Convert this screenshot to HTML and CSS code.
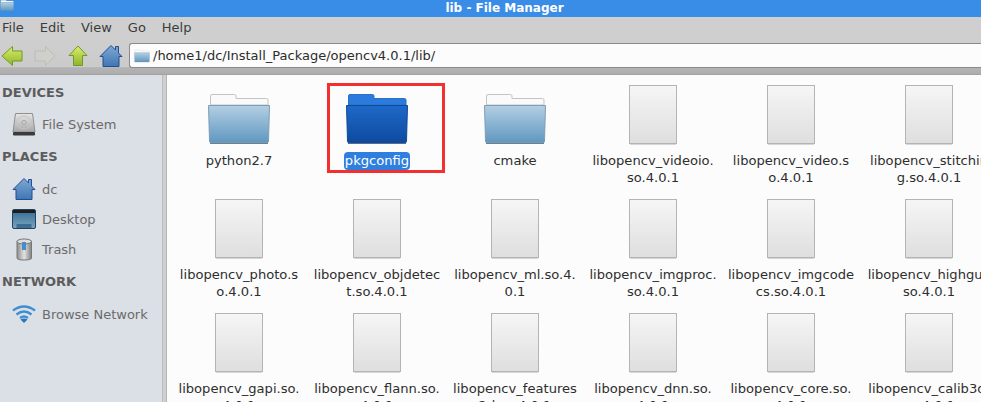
FILE: index.html
```html
<!DOCTYPE html>
<html lang="en">
<head>
<meta charset="utf-8">
<title>lib - File Manager</title>
<link rel="stylesheet" href="styles.css">
</head>
<body>
<svg class="defs" width="0" height="0" aria-hidden="true">
  <defs>
    <linearGradient id="gf" x1="0" y1="0" x2="0" y2="1"><stop offset="0" stop-color="#b3cfe4"/><stop offset="1" stop-color="#6097bf"/></linearGradient>
    <linearGradient id="gs" x1="0" y1="0" x2="0" y2="1"><stop offset="0" stop-color="#1f69c8"/><stop offset="1" stop-color="#0d4a9f"/></linearGradient>
    <linearGradient id="gd" x1="0" y1="0" x2="0" y2="1"><stop offset="0" stop-color="#f6f6f6"/><stop offset="1" stop-color="#dedede"/></linearGradient>
    <linearGradient id="gg" x1="0" y1="0" x2="0" y2="1"><stop offset="0" stop-color="#dcee6a"/><stop offset="1" stop-color="#8cb52a"/></linearGradient>
    <linearGradient id="gh" x1="0" y1="0" x2="0" y2="1"><stop offset="0" stop-color="#7fa8d4"/><stop offset="1" stop-color="#3f76b4"/></linearGradient>
    <linearGradient id="gdesk" x1="0" y1="0" x2="0" y2="1"><stop offset="0" stop-color="#2f6a94"/><stop offset="1" stop-color="#7da6bd"/></linearGradient>
    <linearGradient id="ghd" x1="0" y1="0" x2="0" y2="1"><stop offset="0" stop-color="#e6e6e6"/><stop offset="1" stop-color="#a8a8a8"/></linearGradient>
    <linearGradient id="gt" x1="0" y1="0" x2="1" y2="0"><stop offset="0" stop-color="#8d8d8d"/><stop offset=".5" stop-color="#e2e2e2"/><stop offset="1" stop-color="#808080"/></linearGradient>
    <symbol id="folder" viewBox="0 0 64 60">
      <path d="M3.500 20V11Q3.500 9.500 5 9.500H27.500Q29 9.500 29 11V13.500H59.500Q61 13.500 61 15V20Z" fill="#fafafa" stroke="#c4c4c4"/>
      <path d="M1.500 20.500H62.500L61.500 56Q61.500 58 59.500 58H4.500Q2.500 58 2.500 56Z" fill="url(#gf)" stroke="#7f9db5"/>
      <path d="M3 58.500H61" stroke="#6f7f8c"/>
    </symbol>
    <symbol id="folder-sel" viewBox="0 0 64 60">
      <path d="M3.500 20V11Q3.500 9.500 5 9.500H27.500Q29 9.500 29 11V13.500H59.500Q61 13.500 61 15V20Z" fill="#2b7bdc" stroke="#2a70c8"/>
      <path d="M1.500 20.500H62.500L61.500 56Q61.500 58 59.500 58H4.500Q2.500 58 2.500 56Z" fill="url(#gs)" stroke="#0f4a98"/>
      <path d="M3 58.500H61" stroke="#5d6f88"/>
    </symbol>
    <symbol id="doc" viewBox="0 0 48 60">
      <rect x=".5" y=".5" width="47" height="58" fill="url(#gd)" stroke="#b4b4b4"/>
      <path d="M1 59.500H47" stroke="#d6d6d6"/>
    </symbol>
    <symbol id="house" viewBox="0 0 24 24">
      <path d="M1 12.500 12 1.500 16.500 6V2.500H19.500V9L23 12.500 20 12.500V22.500H4V12.500Z" fill="url(#gh)" stroke="#1f4f90" stroke-linejoin="round"/>
    </symbol>
  </defs>
</svg>

<div class="window">
  <header class="titlebar">
    <svg class="title-icon" width="14" height="13" viewBox="0 9 64 50"><use href="#folder" width="64" height="60"/></svg>
    <span class="title-text">lib - File Manager</span>
  </header>

  <nav class="menubar">
    <span class="menu-item">File</span>
    <span class="menu-item">Edit</span>
    <span class="menu-item">View</span>
    <span class="menu-item">Go</span>
    <span class="menu-item">Help</span>
  </nav>

  <div class="toolbar">
    <svg class="tool tool-back" width="22" height="22" viewBox="0 0 22 22"><path d="M1 11 11.500 1.500V6H21V16H11.500V20.500Z" fill="url(#gg)" stroke="#6f9a2a" stroke-linejoin="round"/></svg>
    <svg class="tool tool-forward" width="22" height="22" viewBox="0 0 22 22"><path d="M21 11 11.500 1.500V6H1V16H11.500V20.500Z" fill="#cfcfcc" stroke="#bcbcb8" stroke-linejoin="round"/></svg>
    <svg class="tool tool-up" width="20" height="22" viewBox="0 0 20 22"><path d="M10 1 19 10.500H14.500V20.500H5.500V10.500H1Z" fill="url(#gg)" stroke="#6f9a2a" stroke-linejoin="round"/></svg>
    <svg class="tool tool-home" width="24" height="24"><use href="#house"/></svg>
    <div class="address">
      <svg width="16" height="14" viewBox="0 9 64 50"><use href="#folder" width="64" height="60"/></svg>
      <span class="path">/home1/dc/Install_Package/opencv4.0.1/lib/</span>
    </div>
  </div>

  <div class="content">
    <aside class="sidebar">
      <h2 class="side-head">DEVICES</h2>
      <div class="side-row">
        <svg width="24" height="24" viewBox="0 0 24 24"><path d="M3.500 1.500H20.500L23 20H1Z" fill="url(#ghd)" stroke="#8f8f8f"/><ellipse cx="12" cy="10.500" rx="7.500" ry="6.500" fill="none" stroke="#c4c4c4"/><circle cx="12" cy="10.500" r="2" fill="#cfcfcf" stroke="#a5a5a5"/><rect x="1" y="20" width="22" height="3.500" rx="1" fill="#3b3b3b"/></svg>
        <span>File System</span>
      </div>
      <h2 class="side-head">PLACES</h2>
      <div class="side-row">
        <svg width="24" height="24"><use href="#house"/></svg>
        <span>dc</span>
      </div>
      <div class="side-row row-tight">
        <svg width="24" height="20" viewBox="0 0 24 20"><rect x=".5" y=".5" width="23" height="19" rx="1.500" fill="url(#gdesk)" stroke="#23435e"/><rect x="1" y="1" width="22" height="3" fill="#1d1d1d"/><rect x="4.500" y="15" width="15" height="4" fill="#3d6d90"/></svg>
        <span>Desktop</span>
      </div>
      <div class="side-row row-tight">
        <svg width="24" height="23" viewBox="0 0 24 23"><path d="M5 3H19.500V20Q19.500 22 12 22 5 22 5 20Z" fill="url(#gt)" stroke="#777"/><ellipse cx="12.200" cy="3.500" rx="7.300" ry="2.500" fill="#dcdcdc" stroke="#777"/><rect x="10" y="4" width="4" height="8" fill="#4a8cc8"/></svg>
        <span>Trash</span>
      </div>
      <h2 class="side-head">NETWORK</h2>
      <div class="side-row">
        <svg width="24" height="20" viewBox="0 0 24 20"><path d="M1 6.500Q12 -1.500 23 6.500" fill="none" stroke="#3f8fd0" stroke-width="2.400"/><path d="M4.500 10.500Q12 4.500 19.500 10.500" fill="none" stroke="#3f8fd0" stroke-width="2.400"/><path d="M8 14Q12 11 16 14" fill="none" stroke="#3f8fd0" stroke-width="2.200"/><path d="M12 19 8.500 15.500Q12 13.500 15.500 15.500Z" fill="#2a75b8"/></svg>
        <span>Browse Network</span>
      </div>
    </aside>

    <div class="splitter"></div>

    <main class="files">
      <div class="item"><svg width="64" height="60"><use href="#folder"/></svg><span class="label">python2.7</span></div>
      <div class="item"><svg width="64" height="60"><use href="#folder-sel"/></svg><span class="label selected">pkgconfig</span></div>
      <div class="item"><svg width="64" height="60"><use href="#folder"/></svg><span class="label">cmake</span></div>
      <div class="item"><svg width="48" height="60"><use href="#doc"/></svg><span class="label">libopencv_videoio.<br>so.4.0.1</span></div>
      <div class="item"><svg width="48" height="60"><use href="#doc"/></svg><span class="label">libopencv_video.s<br>o.4.0.1</span></div>
      <div class="item"><svg width="48" height="60"><use href="#doc"/></svg><span class="label">libopencv_stitchin<br>g.so.4.0.1</span></div>

      <div class="item"><svg width="48" height="60"><use href="#doc"/></svg><span class="label">libopencv_photo.s<br>o.4.0.1</span></div>
      <div class="item"><svg width="48" height="60"><use href="#doc"/></svg><span class="label">libopencv_objdetec<br>t.so.4.0.1</span></div>
      <div class="item"><svg width="48" height="60"><use href="#doc"/></svg><span class="label">libopencv_ml.so.4.<br>0.1</span></div>
      <div class="item"><svg width="48" height="60"><use href="#doc"/></svg><span class="label">libopencv_imgproc.<br>so.4.0.1</span></div>
      <div class="item"><svg width="48" height="60"><use href="#doc"/></svg><span class="label">libopencv_imgcode<br>cs.so.4.0.1</span></div>
      <div class="item"><svg width="48" height="60"><use href="#doc"/></svg><span class="label">libopencv_highgui.<br>so.4.0.1</span></div>

      <div class="item"><svg width="48" height="60"><use href="#doc"/></svg><span class="label">libopencv_gapi.so.<br>4.0.1</span></div>
      <div class="item"><svg width="48" height="60"><use href="#doc"/></svg><span class="label">libopencv_flann.so.<br>4.0.1</span></div>
      <div class="item"><svg width="48" height="60"><use href="#doc"/></svg><span class="label">libopencv_features<br>2d.so.4.0.1</span></div>
      <div class="item"><svg width="48" height="60"><use href="#doc"/></svg><span class="label">libopencv_dnn.so.<br>4.0.1</span></div>
      <div class="item"><svg width="48" height="60"><use href="#doc"/></svg><span class="label">libopencv_core.so.<br>4.0.1</span></div>
      <div class="item"><svg width="48" height="60"><use href="#doc"/></svg><span class="label">libopencv_calib3d.<br>so.4.0.1</span></div>
    </main>
  </div>
  <div class="highlight"></div>
</div>
</body>
</html>
```
FILE: styles.css
```css
* { box-sizing: border-box; }
html, body { margin: 0; padding: 0; }
body { font-family: "DejaVu Sans", sans-serif; font-size: 13px; background: #fff; }
.defs { position: absolute; }
.window { position: relative; width: 981px; height: 402px; overflow: hidden; display: flex; flex-direction: column; }

.titlebar { height: 17px; background: #398de6; position: relative; display: flex; justify-content: center; align-items: center; flex: none; overflow: hidden; padding-left: 28px; }
.title-icon { position: absolute; left: 0; top: -1px; }
.title-text { color: #fff; font-weight: bold; font-size: 12px; line-height: 17px; }

.menubar { height: 21px; background: #cfcfcf; display: flex; align-items: center; gap: 16px; padding-left: 2px; flex: none; color: #3c3c3c; }
.menu-item { line-height: 20px; }

.toolbar { height: 37px; background: linear-gradient(#cfcfcf 0, #cbcbcb 78%, #b4b4b4 80%, #adadad 97%, #999 100%); display: flex; align-items: center; padding: 0 0 2px 1px; flex: none; }
.tool { flex: none; }
.tool-forward { margin-left: 11px; }
.tool-up { margin-left: 12px; }
.tool-home { margin-left: 11px; }
.address { flex: 1; height: 25px; margin-left: 6px; background: #fcfcfc; border: 1px solid #8a8a8a; border-right: 0; border-radius: 3px 0 0 3px; display: flex; align-items: center; padding-left: 4px; gap: 3px; color: #2c2c2c; }
.path { font-size: 13px; }

.content { flex: 1; display: flex; min-height: 0; }
.sidebar { width: 162px; flex: none; background: #dbdfe6; padding-top: 10px; color: #6b6b6b; }
.side-head { margin: 10px 0 0 2px; font-size: 13px; line-height: 16px; font-weight: bold; color: #5c5c5c; }
.side-head:first-child { margin-top: 0; margin-bottom: -1px; }
.side-row { display: flex; align-items: center; height: 30px; padding-left: 12px; gap: 6px; margin-top: 9px; }
.side-row svg { flex: none; }
.row-tight { margin-top: 0; }
.splitter { width: 5px; flex: none; background: #cfcfcf; border-left: 1px solid #bdbdbd; border-right: 1px solid #b5b5b5; }

.files { flex: 1; background: #fcfcfc; display: grid; grid-template-columns: repeat(6, 138px); grid-auto-rows: 114px; padding: 10px 0 0 3px; overflow: hidden; min-width: 0; align-content: start; }
.item { display: flex; flex-direction: column; align-items: center; color: #2e2e2e; line-height: 17px; text-align: center; white-space: nowrap; height: 114px; overflow: visible; }
.item svg { flex: none; }
.label { margin-top: 7px; padding: 0 1px; font-size: 13.1px; }
.selected { background: #2f80de; color: #fff; border-radius: 4px; padding-bottom: 1px; }

.highlight { position: absolute; left: 327px; top: 83px; width: 118px; height: 90px; border: 3px solid #f23030; pointer-events: none; }
```
